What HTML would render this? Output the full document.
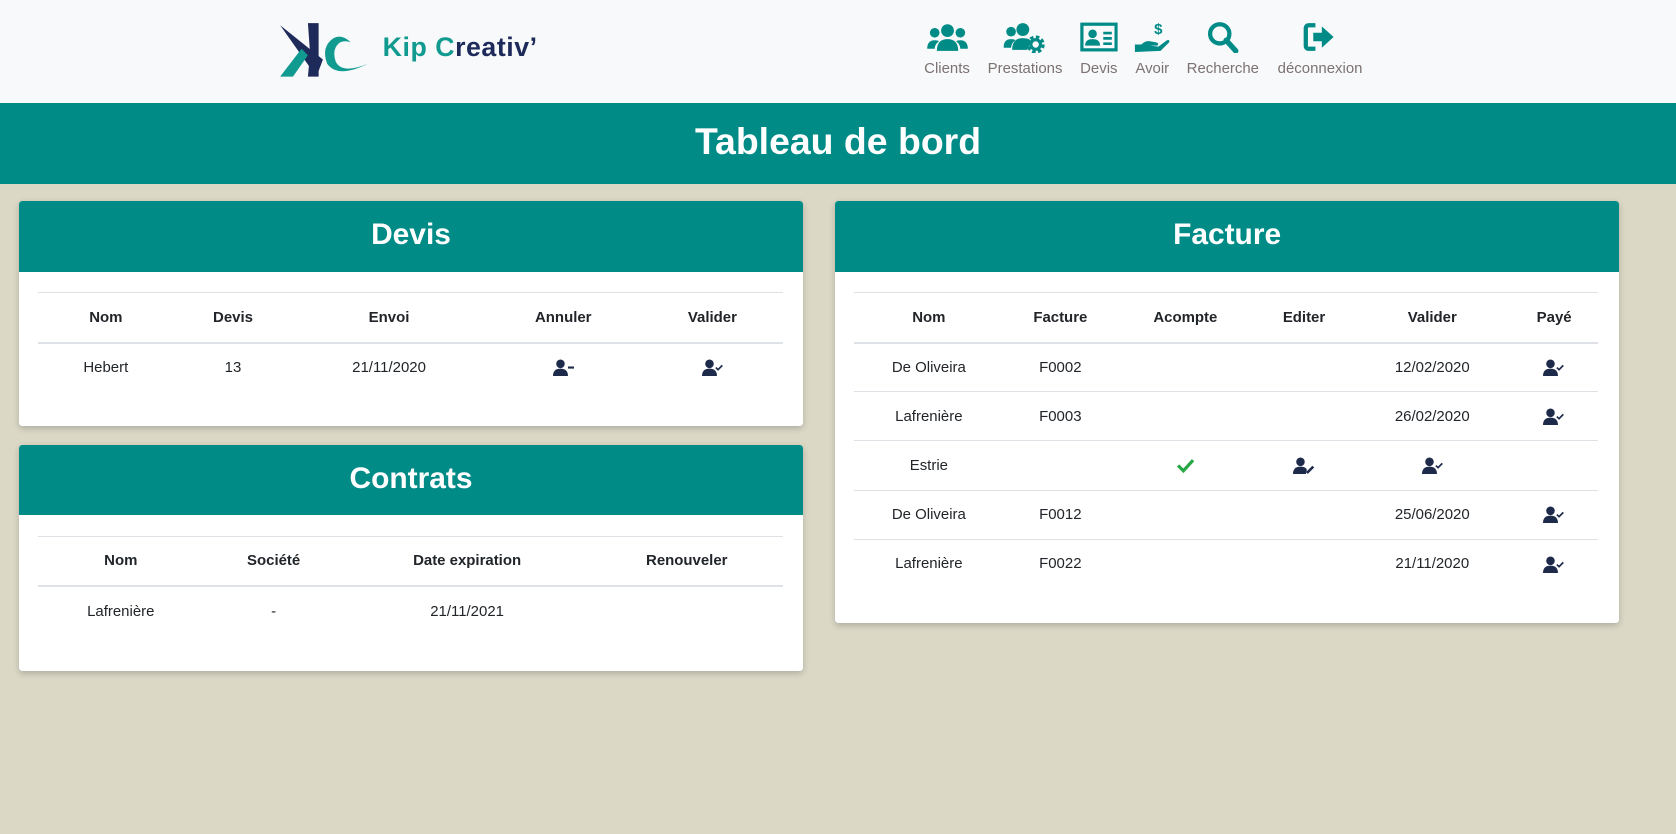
<!DOCTYPE html>
<html><head><meta charset="utf-8">
<style>
*{box-sizing:border-box;margin:0;padding:0}
html,body{width:1676px;height:834px;overflow:hidden;background:#dbd8c6;font-family:"Liberation Sans",sans-serif;color:#212529}
#w{zoom:1.0689;width:1568px;height:780px;position:relative}
.hdr{position:absolute;left:0;top:0;width:1568px;height:96px;background:#f8f9fa}
.ban{position:absolute;left:0;top:96px;width:1568px;height:76px;background:#008b87;color:#fff;font-size:35px;font-weight:bold;text-align:center;line-height:72px}
.nav{position:absolute;top:20px;text-align:center;color:#7d7272;font-size:14px;transform:translateX(-50%);white-space:nowrap}
.nav svg{display:block;margin:0 auto 6px;height:30px}
.card{position:absolute;background:#fff;border-radius:3px;box-shadow:0 2px 6px rgba(0,0,0,.2);overflow:hidden}
.ch{height:66px;background:#008b87;color:#fff;font-size:28px;font-weight:bold;text-align:center;line-height:64px}
table{position:absolute;left:18px;top:85px;border-collapse:collapse;font-size:14px;table-layout:fixed}
th{height:47px;border-top:1px solid #dee2e6;border-bottom:2px solid #dee2e6;font-weight:bold;text-align:center;color:#212529}
td{height:46px;border-bottom:1px solid #dee2e6;text-align:center;color:#212529}
tr:last-child td{border-bottom:none}
td svg{vertical-align:middle}
</style></head><body><div id="w">
<div class="hdr">
<svg style="position:absolute;left:260px;top:20px" width="84" height="54" viewBox="0 0 84 54">
<path d="M2 4 L42 36 L36 52 Z" fill="#1e2a5a"/>
<path d="M2 52 L14 52 L28 32 L22 26 Z" fill="#119a8f"/>
<path d="M28 2 L38 2 L38 52 L28 52 L30 30 Z" fill="#1e2a5a"/>
<path d="M68 20 Q60 12 52 16 Q40 24 46 40 Q56 54 84 40 Q60 50 54 38 Q50 26 58 20 Q63 18 68 20 Z" fill="#119a8f"/>
</svg>
<div style="position:absolute;left:358px;top:30px;font-size:25px;font-weight:bold;color:#1e2a5a;letter-spacing:.5px"><span style="color:#119a8f">Kip C</span>reativ’</div>
<div class="nav" style="left:886px"><svg viewBox="0 0 40 28" width="40"><circle cx="20" cy="8" r="6" fill="#008b87"/><circle cx="8" cy="10" r="4.5" fill="#008b87"/><circle cx="32" cy="10" r="4.5" fill="#008b87"/><path d="M10 27 Q10 16 20 16 Q30 16 30 27Z M1 25 Q1 17 8 17 Q11 17 12 18 Q8 21 8 25Z M39 25 Q39 17 32 17 Q29 17 28 18 Q32 21 32 25Z" fill="#008b87"/></svg>Clients</div>
<div class="nav" style="left:959px"><svg viewBox="0 0 40 30" width="40"><circle cx="18" cy="8" r="6" fill="#008b87"/><circle cx="7" cy="10" r="4.5" fill="#008b87"/><path d="M8 27 Q8 16 18 16 Q24 16 26 19 L22 27Z M0 25 Q0 17 7 17 Q10 17 11 18 Q7 21 7 25Z" fill="#008b87"/><circle cx="30" cy="22" r="6.5" fill="none" stroke="#008b87" stroke-width="4" stroke-dasharray="3 2.1"/><circle cx="30" cy="22" r="4.5" fill="none" stroke="#008b87" stroke-width="3"/></svg>Prestations</div>
<div class="nav" style="left:1028px"><svg viewBox="0 0 36 28" width="36"><rect x="2" y="2" width="32" height="24" fill="none" stroke="#008b87" stroke-width="3"/><circle cx="12" cy="11" r="4" fill="#008b87"/><path d="M5 22 Q5 16 12 16 Q19 16 19 22Z M22 9h8v2.5h-8zM22 14h8v2.5h-8zM22 19h8v2.5h-8z" fill="#008b87"/></svg>Devis</div>
<div class="nav" style="left:1078px"><svg viewBox="0 0 36 30" width="36"><text x="20" y="12" font-size="14" font-weight="bold" fill="#008b87" font-family="Liberation Sans">$</text><path d="M2 22 L8 22 Q12 18 16 19 L22 20 Q25 21 23 23 L16 23 L24 24 L32 18 Q35 17 34 20 L26 28 L2 29Z" fill="#008b87"/></svg>Avoir</div>
<div class="nav" style="left:1144px"><svg viewBox="0 0 32 30" width="32"><circle cx="13" cy="12" r="9" fill="none" stroke="#008b87" stroke-width="4"/><path d="M19 18 L28 28" stroke="#008b87" stroke-width="5" stroke-linecap="round"/></svg>Recherche</div>
<div class="nav" style="left:1235px"><svg viewBox="0 0 32 30" width="32"><path d="M12 4 H6 Q3 4 3 7 V23 Q3 26 6 26 H12" fill="none" stroke="#008b87" stroke-width="4"/><path d="M10 11 H18 V5 L29 15 L18 25 V19 H10Z" fill="#008b87"/></svg>déconnexion</div>
</div>
<div class="ban">Tableau de bord</div>

<div class="card" style="left:18px;top:188px;width:733px;height:211px">
<div class="ch">Devis</div>
<table style="width:697px"><colgroup><col style="width:126px"><col style="width:112px"><col style="width:180px"><col style="width:146px"><col style="width:133px"></colgroup>
<tr><th>Nom</th><th>Devis</th><th>Envoi</th><th>Annuler</th><th>Valider</th></tr>
<tr><td>Hebert</td><td>13</td><td>21/11/2020</td>
<td><svg width="20" height="16" viewBox="0 0 20 16"><circle cx="7" cy="4.5" r="4" fill="#1e2a4a"/><path d="M0 16 Q0 9 7 9 Q14 9 14 16Z" fill="#1e2a4a"/><rect x="14" y="7" width="6" height="2" fill="#1e2a4a"/></svg></td>
<td><svg width="20" height="16" viewBox="0 0 20 16"><circle cx="7" cy="4.5" r="4" fill="#1e2a4a"/><path d="M0 16 Q0 9 7 9 Q14 9 14 16Z" fill="#1e2a4a"/><path d="M13 8 l2 2 l4 -4" fill="none" stroke="#1e2a4a" stroke-width="1.6"/></svg></td></tr>
</table></div>

<div class="card" style="left:18px;top:416px;width:733px;height:212px">
<div class="ch">Contrats</div>
<table style="width:697px"><colgroup><col style="width:154px"><col style="width:132px"><col style="width:230px"><col style="width:181px"></colgroup>
<tr><th>Nom</th><th>Société</th><th>Date expiration</th><th>Renouveler</th></tr>
<tr><td>Lafrenière</td><td>-</td><td>21/11/2021</td><td></td></tr>
</table></div>

<div class="card" style="left:781px;top:188px;width:734px;height:395px">
<div class="ch">Facture</div>
<table style="width:696px"><colgroup><col style="width:140px"><col style="width:106px"><col style="width:128px"><col style="width:94px"><col style="width:146px"><col style="width:82px"></colgroup>
<tr><th>Nom</th><th>Facture</th><th>Acompte</th><th>Editer</th><th>Valider</th><th>Payé</th></tr>
<tr><td>De Oliveira</td><td>F0002</td><td></td><td></td><td>12/02/2020</td><td><svg width="20" height="16" viewBox="0 0 20 16"><circle cx="7" cy="4.5" r="4" fill="#1e2a4a"/><path d="M0 16 Q0 9 7 9 Q14 9 14 16Z" fill="#1e2a4a"/><path d="M13 8 l2 2 l4 -4" fill="none" stroke="#1e2a4a" stroke-width="1.6"/></svg></td></tr>
<tr><td>Lafrenière</td><td>F0003</td><td></td><td></td><td>26/02/2020</td><td><svg width="20" height="16" viewBox="0 0 20 16"><circle cx="7" cy="4.5" r="4" fill="#1e2a4a"/><path d="M0 16 Q0 9 7 9 Q14 9 14 16Z" fill="#1e2a4a"/><path d="M13 8 l2 2 l4 -4" fill="none" stroke="#1e2a4a" stroke-width="1.6"/></svg></td></tr>
<tr><td>Estrie</td><td></td><td><svg width="16" height="14" viewBox="0 0 16 14"><path d="M1 7 l5 5 l9 -10" fill="none" stroke="#28a745" stroke-width="3"/></svg></td>
<td><svg width="20" height="16" viewBox="0 0 20 16"><circle cx="7" cy="4.5" r="4" fill="#1e2a4a"/><path d="M0 16 Q0 9 7 9 Q12 9 13 12 L12 16Z" fill="#1e2a4a"/><path d="M13 15 l6 -6" stroke="#1e2a4a" stroke-width="2.4"/></svg></td>
<td><svg width="20" height="16" viewBox="0 0 20 16"><circle cx="7" cy="4.5" r="4" fill="#1e2a4a"/><path d="M0 16 Q0 9 7 9 Q14 9 14 16Z" fill="#1e2a4a"/><path d="M13 8 l2 2 l4 -4" fill="none" stroke="#1e2a4a" stroke-width="1.6"/></svg></td><td></td></tr>
<tr><td>De Oliveira</td><td>F0012</td><td></td><td></td><td>25/06/2020</td><td><svg width="20" height="16" viewBox="0 0 20 16"><circle cx="7" cy="4.5" r="4" fill="#1e2a4a"/><path d="M0 16 Q0 9 7 9 Q14 9 14 16Z" fill="#1e2a4a"/><path d="M13 8 l2 2 l4 -4" fill="none" stroke="#1e2a4a" stroke-width="1.6"/></svg></td></tr>
<tr><td>Lafrenière</td><td>F0022</td><td></td><td></td><td>21/11/2020</td><td><svg width="20" height="16" viewBox="0 0 20 16"><circle cx="7" cy="4.5" r="4" fill="#1e2a4a"/><path d="M0 16 Q0 9 7 9 Q14 9 14 16Z" fill="#1e2a4a"/><path d="M13 8 l2 2 l4 -4" fill="none" stroke="#1e2a4a" stroke-width="1.6"/></svg></td></tr>
</table></div>
</div></body></html>
